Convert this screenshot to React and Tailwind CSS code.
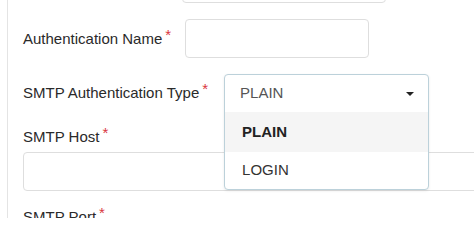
import { useState } from "react";

const font = { fontFamily: '"Liberation Sans", Arial, sans-serif' };

function Label({ children }) {
  return (
    <span className="text-[15px] leading-[20px] text-[#2a2a2a]">
      {children}
      <span className="relative -top-[4px] ml-[3px] text-[15px] text-[#d9363e]">*</span>
    </span>
  );
}

export default function App() {
  const [value] = useState("PLAIN");
  const options = ["PLAIN", "LOGIN"];

  return (
    <div style={font} className="w-[474px] h-[218px] overflow-hidden bg-white">
      <div className="ml-[7px] flex h-full flex-col border-l border-[#e4e4e4] pl-[15px]">
        {/* partially visible field above */}
        <div className="-mt-[37px] ml-[159px] h-[40px] w-[204px] shrink-0 rounded-[4px] border border-[#dedede]" />

        <div className="mt-[16px] flex items-center">
          <Label>Authentication Name</Label>
          <div className="ml-[14px] h-[39px] w-[184px] rounded-[4px] border border-[#dedede]" />
        </div>

        <div className="relative mt-[16px] flex items-center">
          <Label>SMTP Authentication Type</Label>
          <div className="relative ml-[16px] h-[38px] w-[205px]">
            <div className="absolute inset-x-0 top-0 z-10 rounded-[4px] border border-[#bcd1da] bg-white shadow-[0_1px_3px_rgba(0,0,0,0.08)]">
              <div className="flex h-[37px] items-center justify-between pl-[15px] pr-[14px] text-[15px] text-[#555]">
                <span>{value}</span>
                <span className="h-0 w-0 border-x-[4px] border-t-[4px] border-x-transparent border-t-[#222]" />
              </div>
              {options.map((o) => (
                <div
                  key={o}
                  className={`flex items-center pl-[17px] text-[15px] ${
                    o === value ? "h-[40px] bg-[#f5f5f5] font-bold text-[#222]" : "h-[37px] text-[#333]"
                  }`}
                >
                  {o}
                </div>
              ))}
            </div>
          </div>
        </div>

        <div className="mt-[15px] flex shrink-0 leading-[20px]">
          <Label>SMTP Host</Label>
        </div>
        <div className="mt-[5px] h-[39px] w-[480px] shrink-0 rounded-[4px] border border-[#dedede]" />

        <div className="mt-[16px] flex shrink-0 leading-[20px]">
          <Label>SMTP Port</Label>
        </div>
      </div>
    </div>
  );
}
